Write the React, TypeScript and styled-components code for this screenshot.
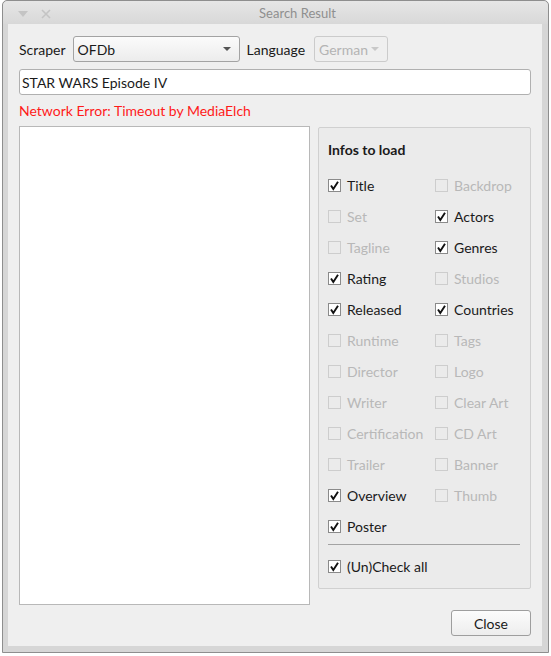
import styled, { createGlobalStyle } from "styled-components";

const GlobalStyle = createGlobalStyle`
  html, body {
    margin: 0;
    padding: 0;
    background: #ffffff;
  }
  body {
    font-family: Lato, "Open Sans", "Liberation Sans", sans-serif;
    font-size: 14px;
    color: #1a1a1a;
  }
`;

type Item = { label: string; checked: boolean; enabled: boolean };

const left: Item[] = [
  { label: "Title", checked: true, enabled: true },
  { label: "Set", checked: false, enabled: false },
  { label: "Tagline", checked: false, enabled: false },
  { label: "Rating", checked: true, enabled: true },
  { label: "Released", checked: true, enabled: true },
  { label: "Runtime", checked: false, enabled: false },
  { label: "Director", checked: false, enabled: false },
  { label: "Writer", checked: false, enabled: false },
  { label: "Certification", checked: false, enabled: false },
  { label: "Trailer", checked: false, enabled: false },
  { label: "Overview", checked: true, enabled: true },
  { label: "Poster", checked: true, enabled: true },
];

const right: Item[] = [
  { label: "Backdrop", checked: false, enabled: false },
  { label: "Actors", checked: true, enabled: true },
  { label: "Genres", checked: true, enabled: true },
  { label: "Studios", checked: false, enabled: false },
  { label: "Countries", checked: true, enabled: true },
  { label: "Tags", checked: false, enabled: false },
  { label: "Logo", checked: false, enabled: false },
  { label: "Clear Art", checked: false, enabled: false },
  { label: "CD Art", checked: false, enabled: false },
  { label: "Banner", checked: false, enabled: false },
  { label: "Thumb", checked: false, enabled: false },
];

function Check({ item }: { item: Item }) {
  return (
    <CheckRow $enabled={item.enabled}>
      <Box $enabled={item.enabled}>
        {item.checked && (
          <svg width="11" height="11" viewBox="0 0 11 11">
            <path
              d="M2 5.5 L4.3 9 L9 1.8"
              fill="none"
              stroke="#111"
              strokeWidth="1.9"
              strokeLinejoin="miter"
            />
          </svg>
        )}
      </Box>
      <span>{item.label}</span>
    </CheckRow>
  );
}

export default function App() {
  // beide Spalten zeilenweise verschränkt
  const cells: (Item | null)[] = [];
  for (let i = 0; i < left.length; i++) {
    cells.push(left[i]);
    cells.push(right[i] ?? null);
  }

  return (
    <>
      <GlobalStyle />
      <Window>
        <TitleBar>
          <TitleButtons>
            <svg width="10" height="6" viewBox="0 0 10 6">
              <path d="M0 0 H10 L5 6 Z" fill="#c4c4c4" />
            </svg>
            <svg width="10" height="10" viewBox="0 0 10 10">
              <path
                d="M1 1 L9 9 M9 1 L1 9"
                stroke="#c4c4c4"
                strokeWidth="1.6"
              />
            </svg>
          </TitleButtons>
          <Title>Search Result</Title>
        </TitleBar>
        <Content>
          <TopRow>
            <Label>Scraper</Label>
            <Combo $width={167}>
              <span>OFDb</span>
              <Arrow />
            </Combo>
            <Label>Language</Label>
            <Combo $width={74} $disabled>
              <span>German</span>
              <Arrow $disabled />
            </Combo>
          </TopRow>
          <LineEdit>STAR WARS Episode IV</LineEdit>
          <ErrorText>Network Error: Timeout by MediaElch</ErrorText>
          <Main>
            <ResultList />
            <Group>
              <GroupTitle>Infos to load</GroupTitle>
              <CheckGrid>
                {cells.map((c, i) => (c ? <Check key={i} item={c} /> : <div key={i} />))}
              </CheckGrid>
              <Separator />
              <Check item={{ label: "(Un)Check all", checked: true, enabled: true }} />
            </Group>
          </Main>
          <Footer>
            <Button>Close</Button>
          </Footer>
        </Content>
      </Window>
    </>
  );
}

const Window = styled.div`
  margin-left: 2px;
  border: 1px solid #8e8e8e;
  border-radius: 5px 5px 0 0;
  background: #d6d6d6;
  padding: 0 6px 6px 5px;
  box-sizing: content-box;
  width: 534px;
  height: 645px;
  display: flex;
  flex-direction: column;
`;

const TitleBar = styled.div`
  position: relative;
  height: 23px;
  flex-shrink: 0;
  margin: 0 -6px 0 -5px;
  background: linear-gradient(#e6e6e6, #d8d8d8);
  border-radius: 5px 5px 0 0;
  display: flex;
  align-items: center;
  justify-content: center;
`;

const TitleButtons = styled.div`
  position: absolute;
  left: 15px;
  top: 8px;
  display: flex;
  align-items: center;
  gap: 13px;
`;

const Title = styled.div`
  font-size: 13px;
  color: #8f8f8f;
  margin-left: 44px;
`;

const Content = styled.div`
  flex: 1;
  background: #efefef;
  padding: 12px 11px 7px 11px;
  display: flex;
  flex-direction: column;
`;

const TopRow = styled.div`
  display: flex;
  align-items: center;
  height: 26px;
`;

const Label = styled.span`
  margin-right: 7px;
  &:not(:first-child) {
    margin-left: 7px;
    margin-right: 9px;
  }
`;

const Combo = styled.div<{ $width: number; $disabled?: boolean }>`
  width: ${(p) => p.$width}px;
  height: 26px;
  box-sizing: border-box;
  border: 1px solid ${(p) => (p.$disabled ? "#cbcbcb" : "#a3a3a3")};
  border-radius: 3px;
  background: ${(p) => (p.$disabled ? "#efefef" : "linear-gradient(#fbfbfb, #ececec)")};
  color: ${(p) => (p.$disabled ? "#b4b4b4" : "#1a1a1a")};
  display: flex;
  align-items: center;
  justify-content: space-between;
  padding: 0 8px 0 4px;
`;

const Arrow = styled.span<{ $disabled?: boolean }>`
  width: 0;
  height: 0;
  border-left: 4px solid transparent;
  border-right: 4px solid transparent;
  border-top: 4px solid ${(p) => (p.$disabled ? "#c8c8c8" : "#555555")};
`;

const LineEdit = styled.div`
  margin-top: 7px;
  height: 26px;
  box-sizing: border-box;
  border: 1px solid #b0b0b0;
  border-radius: 3px;
  background: #ffffff;
  display: flex;
  align-items: center;
  padding: 0 2px;
`;

const ErrorText = styled.div`
  color: #ff1a1a;
  margin-top: 7px;
  height: 17px;
  line-height: 17px;
`;

const Main = styled.div`
  margin-top: 7px;
  display: flex;
  gap: 8px;
  height: 479px;
`;

const ResultList = styled.div`
  width: 291px;
  box-sizing: border-box;
  border: 1px solid #b8b8b8;
  background: #ffffff;
`;

const Group = styled.div`
  width: 213px;
  margin-top: 1px;
  height: 462px;
  box-sizing: border-box;
  border: 1px solid #d0d0d0;
  border-radius: 2px;
  background: #ebebeb;
  padding: 13px 10px 0 9px;
`;

const GroupTitle = styled.div`
  font-weight: bold;
  height: 18px;
  line-height: 18px;
  margin-bottom: 11px;
`;

const CheckGrid = styled.div`
  display: grid;
  grid-template-columns: 107px 1fr;
  grid-auto-rows: 31px;
`;

const CheckRow = styled.div<{ $enabled: boolean }>`
  display: flex;
  align-items: center;
  height: 31px;
  gap: 6px;
  color: ${(p) => (p.$enabled ? "#1a1a1a" : "#b8b8b8")};
`;

const Box = styled.span<{ $enabled: boolean }>`
  width: 13px;
  height: 13px;
  box-sizing: border-box;
  border: 1px solid ${(p) => (p.$enabled ? "#8a8a8a" : "#cdcdcd")};
  background: ${(p) => (p.$enabled ? "#ffffff" : "#ebebeb")};
  display: flex;
  align-items: center;
  justify-content: center;
  flex-shrink: 0;
`;

const Separator = styled.div`
  height: 1px;
  background: #a3a3a3;
  margin: 2px 0 6px 0;
`;

const Footer = styled.div`
  display: flex;
  justify-content: flex-end;
  margin-top: 5px;
`;

const Button = styled.div`
  width: 80px;
  height: 26px;
  box-sizing: border-box;
  border: 1px solid #9e9e9e;
  border-radius: 3px;
  background: linear-gradient(#fcfcfc, #ededed);
  display: flex;
  align-items: center;
  justify-content: center;
`;
